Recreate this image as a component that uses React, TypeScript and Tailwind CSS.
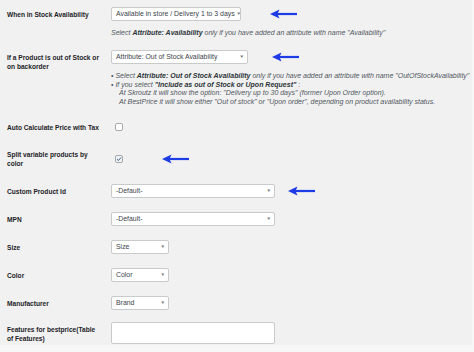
import type { ReactNode } from 'react'
import clsx from 'clsx'

function Arrow({ className }: { className?: string }) {
  return (
    <svg width="27" height="10" viewBox="0 0 27 10" className={clsx('shrink-0', className)}>
      <path d="M0 5 L9.5 0.5 L7.5 5 L9.5 9.5 Z" fill="#1e3ce6" />
      <rect x="7" y="3.9" width="20" height="2.2" fill="#1e3ce6" />
    </svg>
  )
}

function FakeSelect({ value, className }: { value: string; className: string }) {
  return (
    <div
      className={clsx(
        'flex h-[14px] shrink-0 items-center rounded-[2px] border border-[#c9cacc] bg-white pl-[4px] pr-[3px] text-[6.9px] text-[#3c434a]',
        className,
      )}
    >
      <span className="whitespace-nowrap">{value}</span>
      <span className="ml-auto pl-[2px] text-[4.5px] text-[#6b6f74]">▼</span>
    </div>
  )
}

function Checkbox({ checked }: { checked?: boolean }) {
  return (
    <div
      className={clsx(
        'ml-[4px] flex h-[8px] w-[8px] shrink-0 items-center justify-center rounded-[2px] border border-[#a7aaad]',
        checked ? 'bg-[#eef3f8]' : 'bg-white',
      )}
    >
      {checked && (
        <svg width="6" height="6" viewBox="0 0 6 6">
          <polyline points="1,3.2 2.4,4.5 5,1.5" fill="none" stroke="#2c4a6b" strokeWidth="0.9" />
        </svg>
      )}
    </div>
  )
}

interface RowProps {
  label: ReactNode
  children: ReactNode
  className?: string
  labelClassName?: string
}

function Row({ label, children, className, labelClassName }: RowProps) {
  return (
    <div className={clsx('flex', className)}>
      <div
        className={clsx(
          'w-[111px] shrink-0 whitespace-nowrap pl-[7px] text-[6.6px] font-bold leading-[9px] text-[#1d2327]',
          labelClassName ?? 'pt-[2.5px]',
        )}
      >
        {label}
      </div>
      <div className="min-w-0 flex-1">{children}</div>
    </div>
  )
}

export default function App() {
  return (
    <div className="h-[352px] w-[474px] bg-[#f7f7f7] font-['Liberation_Sans',Arial,sans-serif]">
      <div className="h-[345px] w-[472px] overflow-hidden bg-[#f1f1f1]">
        <Row label="When in Stock Availability" className="pt-[7px]">
          <div className="flex items-center">
            <FakeSelect value="Available in store / Delivery 1 to 3 days" className="w-[130px]" />
            <Arrow className="ml-[29px]" />
          </div>
          <p className="mt-[7px] whitespace-nowrap text-[7px] italic leading-[9px] text-[#50575e]">
            Select <b className="text-[#2c3338]">Attribute: Availability</b> only if you have added an attribute with
            name "Availability"
          </p>
        </Row>

        <Row
          label={
            <>
              If a Product is out of Stock or
              <br />
              on backorder
            </>
          }
          className="pt-[13px]"
        >
          <div className="flex items-center">
            <FakeSelect value="Attribute: Out of Stock Availability" className="w-[137px]" />
            <Arrow className="ml-[24px]" />
          </div>
          <div className="mt-[8px] whitespace-nowrap text-[7px] italic leading-[8.5px] text-[#50575e]">
            <p>
              • Select <b className="text-[#2c3338]">Attribute: Out of Stock Availability</b> only if you have added an
              attribute with name "OutOfStockAvailability"
            </p>
            <p>
              • If you select <b className="text-[#2c3338]">"Include as out of Stock or Upon Request"</b> :
            </p>
            <p className="pl-[8px]">At Skroutz it will show the option: "Delivery up to 30 days" (former Upon Order option).</p>
            <p className="pl-[8px]">
              At BestPrice it will show either "Out of stock" or "Upon order", depending on product availability status.
            </p>
          </div>
        </Row>

        <Row label="Auto Calculate Price with Tax" className="mt-[16.5px] items-center" labelClassName="pt-0">
          <Checkbox />
        </Row>

        <Row
          label={
            <>
              Split variable products by
              <br />
              color
            </>
          }
          className="mt-[18px] items-center"
          labelClassName="pt-0"
        >
          <div className="flex items-center">
            <Checkbox checked />
            <Arrow className="ml-[39px]" />
          </div>
        </Row>

        <Row label="Custom Product Id" className="mt-[9.5px] py-[7px]">
          <div className="flex items-center">
            <FakeSelect value="-Default-" className="w-[164px]" />
            <Arrow className="ml-[13px]" />
          </div>
        </Row>

        <Row label="MPN" className="py-[7px]">
          <FakeSelect value="-Default-" className="w-[164px]" />
        </Row>

        <Row label="Size" className="py-[7px]">
          <FakeSelect value="Size" className="w-[58px]" />
        </Row>

        <Row label="Color" className="py-[7px]">
          <FakeSelect value="Color" className="w-[58px]" />
        </Row>

        <Row label="Manufacturer" className="py-[7px]">
          <FakeSelect value="Brand" className="w-[58px]" />
        </Row>

        <Row
          label={
            <>
              Features for bestprice(Table
              <br />
              of Features)
            </>
          }
          className="pt-[5px]"
        >
          <div className="h-[22px] w-[164px] rounded-[2px] border border-[#c9cacc] bg-white" />
        </Row>
      </div>
    </div>
  )
}
